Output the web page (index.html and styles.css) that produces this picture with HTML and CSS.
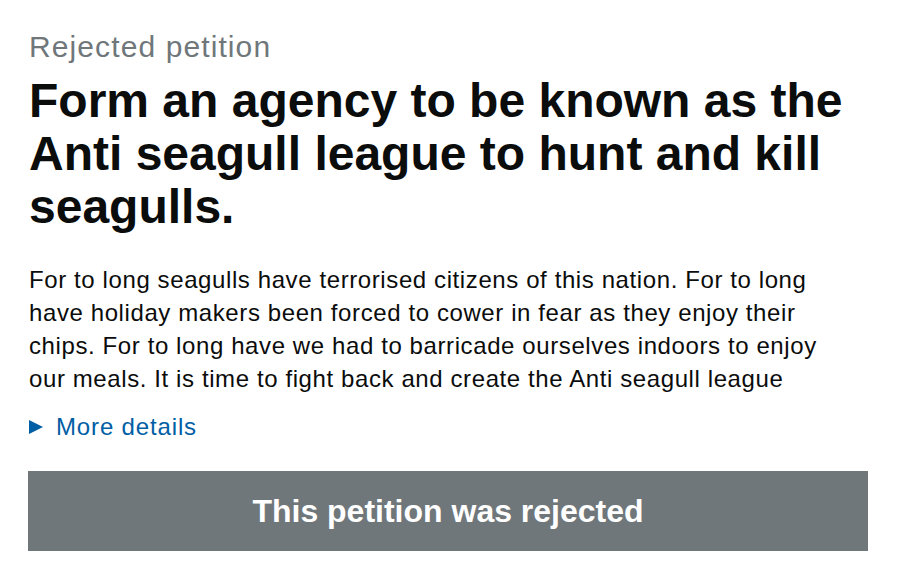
FILE: index.html
```html
<!DOCTYPE html>
<html lang="en">
<head>
<meta charset="utf-8">
<link rel="stylesheet" href="styles.css">
</head>
<body>
<main class="page">
  <p class="caption">Rejected petition</p>
  <h1 class="title">Form an agency to be known as the Anti seagull league to hunt and kill seagulls.</h1>
  <p class="body">For to long seagulls have terrorised citizens of this nation. For to long have holiday makers been forced to cower in fear as they enjoy their chips. For to long have we had to barricade ourselves indoors to enjoy our meals. It is time to fight back and create the Anti seagull league</p>
  <div class="details"><span class="arrow"></span><span class="link">More details</span></div>
  <div class="banner">This petition was rejected</div>
</main>
</body>
</html>
```
FILE: styles.css
```css
html, body {
  margin: 0;
  padding: 0;
  background: #ffffff;
}
.page {
  padding: 29px 32px 0 29px;
  font-family: "Liberation Sans", Arial, sans-serif;
  color: #0b0c0c;
}
.caption {
  margin: 0;
  font-size: 30px;
  line-height: 36px;
  letter-spacing: 1.1px;
  color: #6f777b;
}
.title {
  margin: 9px 0 0 0;
  font-size: 48px;
  line-height: 53px;
  font-weight: bold;
  width: 840px;
}
.body {
  margin: 30px 0 0 0;
  font-size: 24px;
  line-height: 33px;
  letter-spacing: 0.6px;
  width: 815px;
}
.details {
  margin-top: 16px;
  display: flex;
  align-items: center;
  gap: 13px;
  height: 32px;
}
.arrow {
  width: 0;
  height: 0;
  border-top: 7px solid transparent;
  border-bottom: 7px solid transparent;
  border-left: 14px solid #005ea5;
  margin-left: 0;
}
.link {
  font-size: 24px;
  line-height: 32px;
  letter-spacing: 0.85px;
  color: #005ea5;
}
.banner {
  margin-top: 28px;
  margin-left: -1px;
  width: 840px;
  height: 80px;
  background: #6f777b;
  color: #ffffff;
  font-size: 32px;
  font-weight: bold;
  display: flex;
  align-items: center;
  justify-content: center;
}
```
